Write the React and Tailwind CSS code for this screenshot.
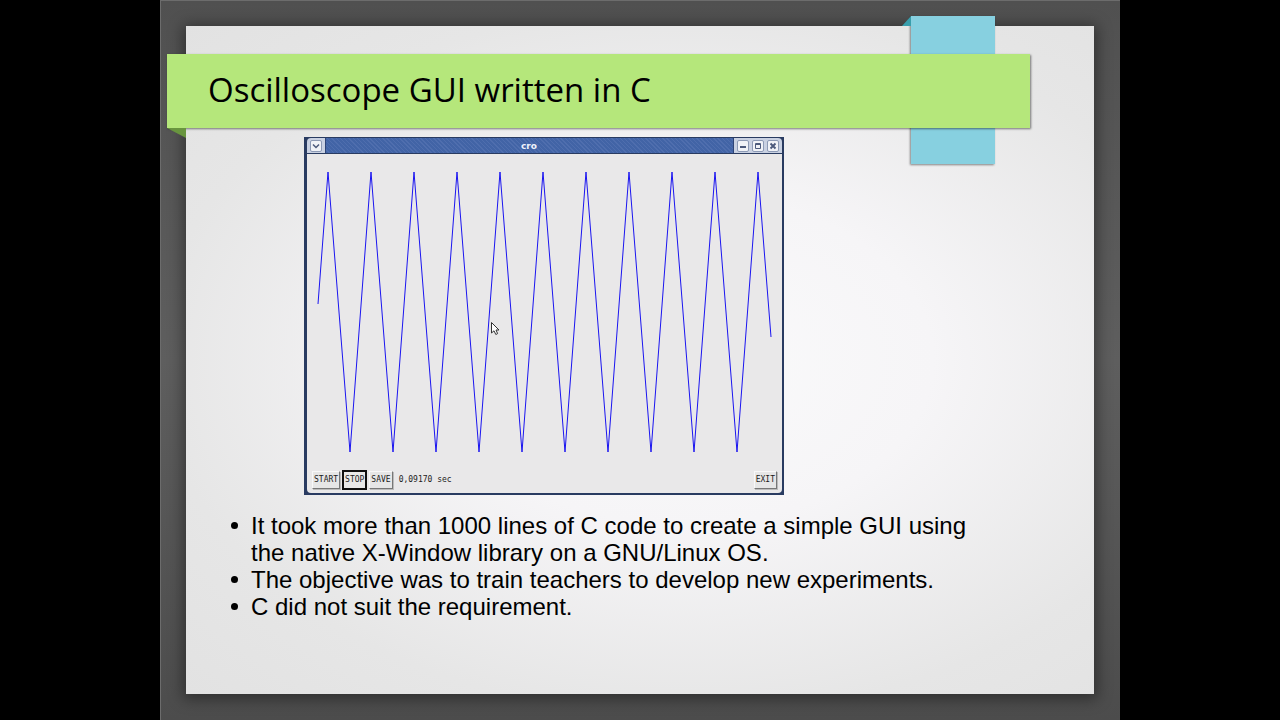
const PEAKS = 11;
const STEP = 43;

function wavePath() {
  let d = 'M11 150';
  for (let i = 0; i < PEAKS; i++) {
    const x = 21 + i * STEP;
    d += ` L${x} 18`;
    if (i < PEAKS - 1) d += ` L${x + 22} 298`;
  }
  return d + ' L464 183';
}

function TitleButton({ label, children }) {
  return (
    <button
      type="button"
      aria-label={label}
      className="flex h-3 w-3 items-center justify-center rounded-xs border border-[#8d9ab5] bg-[#f0f2f7]"
    >
      <svg className="h-2 w-2 shrink-0" viewBox="0 0 8 8" fill="none" stroke="#4c5a7c">
        {children}
      </svg>
    </button>
  );
}

function PanelButton({ children, active = false }) {
  return (
    <button
      type="button"
      className={
        active
          ? 'border-2 border-[#101010] bg-[#e9e9e9]'
          : 'm-px border border-t-[#f8f8f8] border-r-[#777] border-b-[#777] border-l-[#f8f8f8] bg-[#e6e6e6] shadow-[1px_1px_0_#bbb]'
      }
    >
      <span className="block px-px leading-4">{children}</span>
    </button>
  );
}

function ScopeWindow() {
  return (
    <section
      aria-label="cro"
      className="w-[480px] max-w-full border-t border-r-2 border-b-2 border-l-[3px] border-[#293b61] bg-[#293b61]"
    >
      <header className="flex h-4 items-stretch overflow-hidden rounded-t-sm border-b border-[#293b61] bg-[#c9d1e2]">
        <div className="flex w-[18px] items-center justify-center">
          <TitleButton label="Window menu">
            <path d="M1 2.500 L4 5.500 L7 2.500" strokeWidth="1.5" />
          </TitleButton>
        </div>
        <h2 className="flex-1 border-x border-[#2f4577] bg-[repeating-linear-gradient(45deg,#4264a6_0px,#4264a6_2px,#4f6eae_2px,#4f6eae_3px)] pr-px text-center font-['DejaVu_Sans'] text-[9px] leading-4 font-bold text-[#eef2fb]">
          cro
        </h2>
        <div className="flex w-12 items-center justify-evenly">
          <TitleButton label="Minimize">
            <path d="M1 5 H7" strokeWidth="2" />
          </TitleButton>
          <TitleButton label="Maximize">
            <path d="M1.500 1.500 H6.500 V6.500 H1.500 Z M1.500 2.500 H6.500" strokeWidth="1" />
          </TitleButton>
          <TitleButton label="Close">
            <path d="M1.500 1.500 L6.500 6.500 M6.500 1.500 L1.500 6.500" strokeWidth="1.9" />
          </TitleButton>
        </div>
      </header>
      <div className="rounded-b-sm bg-[#e9e8e9] pb-[3px]">
        <svg className="block w-full" viewBox="0 0 475 316" role="img" aria-label="Triangular wave">
          <path d={wavePath()} fill="none" stroke="#1a14f0" strokeWidth="1" strokeLinejoin="bevel" />
          <path
            d="M184.500 168.500 V179 L187 176.800 L188.800 180.500 L190.600 179.600 L189 176 H192 Z"
            fill="#fff"
            stroke="#333"
            strokeWidth="1"
          />
        </svg>
        <div className="flex items-center gap-px px-1 font-['DejaVu_Sans_Mono','Liberation_Mono',monospace] text-[8px] text-[#1c1c1c]">
          <PanelButton>START</PanelButton>
          <PanelButton active>STOP</PanelButton>
          <PanelButton>SAVE</PanelButton>
          <output className="ml-1 flex-1">0,09170 sec</output>
          <PanelButton>EXIT</PanelButton>
        </div>
      </div>
    </section>
  );
}

export default function App() {
  return (
    <div className="flex min-h-screen justify-center bg-black">
      <main className="flex w-3/4 flex-col border-t border-l border-[#6c6c6c] bg-[linear-gradient(180deg,#505050,#5e5e5e_50%,#4c4c4c)] pt-[25px] pr-[26px] pb-[26px] pl-[25px]">
        <article className="relative flex-1 bg-[radial-gradient(ellipse_at_55%_50%,#fafafb_0%,#f6f5f7_35%,#e6e6e6_75%,#e2e2e2_100%)] pt-7 shadow-[0_2px_14px_3px_rgba(0,0,0,0.4)]">
          <div className="absolute -top-[10px] right-[99px] h-[148px] w-[84px] bg-[#87d0e0] shadow-[-1px_1px_2px_rgba(0,0,0,0.45)]" />
          <svg className="absolute -top-[10px] right-[183px] h-[10px] w-[9px]" viewBox="0 0 9 10">
            <path d="M9 0 V10 H0 Z" fill="#399eac" />
          </svg>
          <header className="relative mr-16 -ml-[19px] bg-[#b5e77b] pt-3 pb-[14px] pl-[41px] shadow-[1px_1px_2px_rgba(0,0,0,0.5)]">
            <h1 className="font-['Open_Sans','Noto_Sans',sans-serif] text-[33px] leading-[48px] text-black">
              Oscilloscope GUI written in C
            </h1>
            <svg className="absolute top-full left-0 h-[10px] w-[19px]" viewBox="0 0 19 10">
              <path d="M0 0 H19 V10 Z" fill="#69953f" />
            </svg>
          </header>
          <div className="mt-[9px] ml-[118px]">
            <ScopeWindow />
          </div>
          <ul className="mt-[17px] mr-24 ml-[65px] list-outside font-['Liberation_Sans',Arial,sans-serif] text-[24px] leading-[27px] text-black">
            {[
              'It took more than 1000 lines of C code to create a simple GUI using the native X-Window library on a GNU/Linux OS.',
              'The objective was to train teachers to develop new experiments.',
              'C did not suit the requirement.',
            ].map((text) => (
              <li
                key={text}
                className="relative before:absolute before:top-[10px] before:-left-5 before:h-[7px] before:w-[7px] before:rounded-full before:bg-black"
              >
                {text}
              </li>
            ))}
          </ul>
        </article>
      </main>
    </div>
  );
}
